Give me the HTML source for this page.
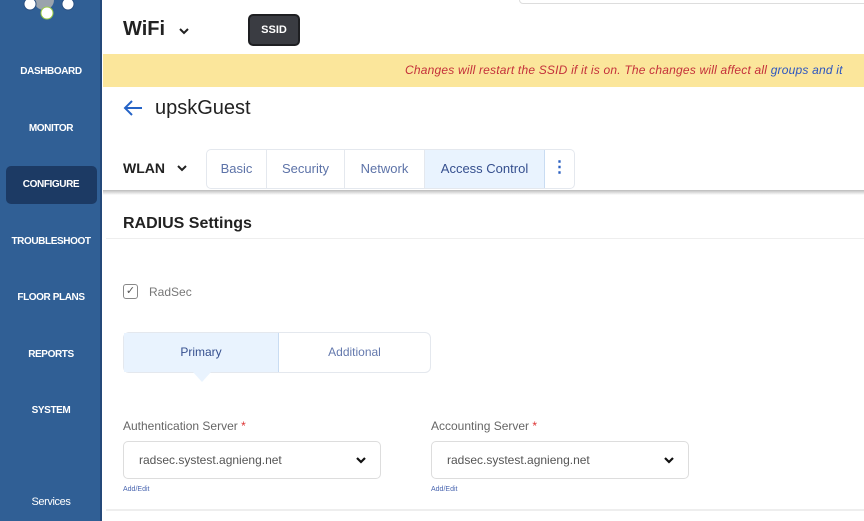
<!DOCTYPE html>
<html><head><meta charset="utf-8"><style>
*{box-sizing:border-box;margin:0;padding:0}
body{width:864px;height:521px;overflow:hidden;background:#fff;font-family:"Liberation Sans",sans-serif;position:relative}
.sb{position:absolute;left:0;top:0;width:102px;height:521px;background:#305f95;border-right:2px solid #24497a}
.sb .t{position:absolute;left:0;width:102px;text-align:center;color:#fff;font-weight:bold;font-size:10px;letter-spacing:-0.4px}
.cfg{position:absolute;left:6px;top:166px;width:91px;height:38px;background:#1c3a64;border-radius:5px}
.a{position:absolute}
</style></head><body>
<div class="sb">
<svg class="a" style="left:20px;top:0" width="60" height="22"><circle cx="24" cy="0" r="10" fill="#9aa3ad"/><circle cx="10" cy="4" r="6" fill="#fff" stroke="#2a4f80"/><circle cx="48" cy="4" r="6" fill="#fff" stroke="#2a4f80"/><circle cx="27" cy="13" r="6" fill="#fff" stroke="#9c4"/></svg>
<div class="t" style="top:66px">DASHBOARD</div>
<div class="t" style="top:123px">MONITOR</div>
<div class="cfg"></div>
<div class="t" style="top:179px">CONFIGURE</div>
<div class="t" style="top:236px">TROUBLESHOOT</div>
<div class="t" style="top:292px">FLOOR PLANS</div>
<div class="t" style="top:349px">REPORTS</div>
<div class="t" style="top:405px">SYSTEM</div>
<div class="t" style="top:496px;font-weight:normal;font-size:11px">Services</div>
</div>
<div class="a" style="left:519px;top:-6px;width:350px;height:10px;border:1px solid #ddd;border-radius:4px"></div>
<div class="a" style="left:123px;top:18px;font-size:20px;font-weight:bold;color:#222">WiFi</div>
<svg class="a" style="left:178px;top:27px" width="12" height="8"><path d="M2 2L6 6L10 2" stroke="#222" stroke-width="2" fill="none"/></svg>
<div class="a" style="left:248px;top:14px;width:52px;height:32px;background:#3a3c42;border:2px solid #1e1f22;border-radius:5px;color:#fff;font-weight:bold;font-size:11px;text-align:center;line-height:28px">SSID</div>
<div class="a" style="left:103px;top:54px;width:761px;height:33px;background:#fbe69b"></div>
<div class="a" style="left:405px;top:63px;font-size:12px;font-style:italic;color:#c4303a;white-space:nowrap;letter-spacing:0.2px">Changes will restart the SSID if it is on. The changes will affect all <span style="color:#2b55c0">groups and it</span></div>
<svg class="a" style="left:122px;top:98px" width="24" height="20"><path d="M20 10H3M10 3L3 10L10 17" stroke="#2563c6" stroke-width="2" fill="none"/></svg>
<div class="a" style="left:155px;top:97px;font-size:20px;color:#222">upskGuest</div>
<div class="a" style="left:103px;top:190px;width:761px;height:5px;background:linear-gradient(#bbb,#fff0)"></div>
<div class="a" style="left:123px;top:160px;font-size:14px;font-weight:bold;color:#222">WLAN</div>
<svg class="a" style="left:176px;top:164px" width="12" height="8"><path d="M2 2L6 6L10 2" stroke="#222" stroke-width="2" fill="none"/></svg>
<div class="a" style="left:206px;top:149px;width:369px;height:40px;border:1px solid #e4e8ee;border-radius:5px;display:flex;font-size:13px;color:#5d73a8;background:#fff">
<div style="width:60px;text-align:center;line-height:38px;border-right:1px solid #e4e8ee">Basic</div>
<div style="width:78px;text-align:center;line-height:38px;border-right:1px solid #e4e8ee">Security</div>
<div style="width:80px;text-align:center;line-height:38px;border-right:1px solid #e4e8ee">Network</div>
<div style="width:120px;text-align:center;line-height:38px;background:#e9f3fe;color:#354f8e;border-right:1px solid #c9dcf2">Access Control</div>
<div style="flex:1;text-align:center;line-height:36px;color:#2a5fc0;font-weight:bold;font-size:16px">&#8942;</div>
</div>
<div class="a" style="left:123px;top:215px;font-size:16px;font-weight:bold;color:#222">RADIUS Settings</div>
<div class="a" style="left:106px;top:238px;width:758px;border-top:1px solid #eee"></div>
<div class="a" style="left:123px;top:284px;width:15px;height:15px;border:1.5px solid #888;border-radius:3px;font-size:11px;line-height:12px;text-align:center;color:#555">&#10003;</div>
<div class="a" style="left:149px;top:285px;font-size:12px;color:#777">RadSec</div>
<div class="a" style="left:123px;top:332px;width:308px;height:41px;border:1px solid #e4e8ee;border-radius:6px;display:flex;font-size:12px">
<div style="width:155px;background:#e9f3fe;text-align:center;line-height:39px;color:#354f8e;border-right:1px solid #c9dcf2">Primary</div>
<div style="flex:1;text-align:center;line-height:39px;color:#6479ad">Additional</div>
</div>
<div class="a" style="left:193px;top:372px;width:0;height:0;border-left:9px solid transparent;border-right:9px solid transparent;border-top:10px solid #e9f3fe"></div>
<div class="a" style="left:123px;top:419px;font-size:12px;color:#666">Authentication Server <span style="color:#d33">*</span></div>
<div class="a" style="left:431px;top:419px;font-size:12px;color:#666">Accounting Server <span style="color:#d33">*</span></div>
<div class="a" style="left:123px;top:441px;width:258px;height:38px;border:1px solid #ddd;border-radius:5px;font-size:12px;color:#555;padding-left:15px;line-height:36px">radsec.systest.agnieng.net</div>
<svg class="a" style="left:355px;top:456px" width="12" height="8"><path d="M2 2L6 6L10 2" stroke="#111" stroke-width="2.2" fill="none"/></svg>
<div class="a" style="left:431px;top:441px;width:258px;height:38px;border:1px solid #ddd;border-radius:5px;font-size:12px;color:#555;padding-left:15px;line-height:36px">radsec.systest.agnieng.net</div>
<svg class="a" style="left:663px;top:456px" width="12" height="8"><path d="M2 2L6 6L10 2" stroke="#111" stroke-width="2.2" fill="none"/></svg>
<div class="a" style="left:123px;top:486px;font-size:7px;color:#4a66b0">Add/Edit</div>
<div class="a" style="left:431px;top:486px;font-size:7px;color:#4a66b0">Add/Edit</div>
<div class="a" style="left:106px;top:509px;width:758px;border-top:2px solid #eee"></div>
</body></html>
